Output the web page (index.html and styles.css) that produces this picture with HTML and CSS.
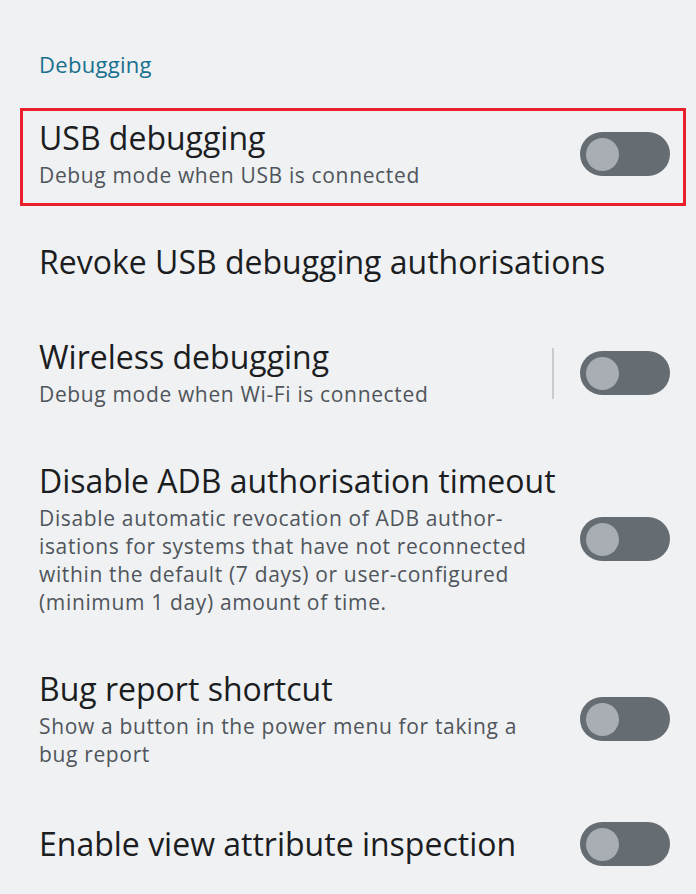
FILE: index.html
```html
<!DOCTYPE html>
<html lang="en">
<head>
<meta charset="utf-8">
<title>Debugging</title>
<link rel="stylesheet" href="styles.css">
</head>
<body>
<div class="page">
  <div class="section-header">Debugging</div>
  <div class="list">
    <div class="row highlighted">
      <div class="text">
        <div class="title">USB debugging</div>
        <div class="summary">Debug mode when USB is connected</div>
      </div>
      <div class="switch"><span class="thumb"></span></div>
    </div>
    <div class="row single">
      <div class="text">
        <div class="title">Revoke USB debugging authorisations</div>
      </div>
    </div>
    <div class="row">
      <div class="text">
        <div class="title">Wireless debugging</div>
        <div class="summary">Debug mode when Wi-Fi is connected</div>
      </div>
      <div class="divider"></div>
      <div class="switch"><span class="thumb"></span></div>
    </div>
    <div class="row">
      <div class="text">
        <div class="title">Disable ADB authorisation timeout</div>
        <div class="summary">Disable automatic revocation of ADB author-<br>isations for systems that have not reconnected<br>within the default (7 days) or user-configured<br>(minimum 1 day) amount of time.</div>
      </div>
      <div class="switch"><span class="thumb"></span></div>
    </div>
    <div class="row">
      <div class="text">
        <div class="title">Bug report shortcut</div>
        <div class="summary">Show a button in the power menu for taking a<br>bug report</div>
      </div>
      <div class="switch"><span class="thumb"></span></div>
    </div>
    <div class="row single">
      <div class="text">
        <div class="title">Enable view attribute inspection</div>
      </div>
      <div class="switch"><span class="thumb"></span></div>
    </div>
  </div>
</div>
</body>
</html>
```
FILE: styles.css
```css
html, body {
  margin: 0;
  padding: 0;
  background: #eff1f3;
}
body {
  font-family: "Open Sans", "Noto Sans", sans-serif;
  width: 696px;
  height: 894px;
  overflow: hidden;
}
.page {
  padding-top: 50px;
}
.section-header {
  padding-left: 39px;
  font-size: 22px;
  line-height: 28px;
  letter-spacing: 0.3px;
  color: #18708e;
  margin-bottom: 30px;
}
.list {
  display: flex;
  flex-direction: column;
  gap: 26px;
}
.row {
  display: flex;
  align-items: center;
  margin: 0 10px 0 20px;
  border: 3px solid transparent;
  padding: 8px 13px 14px 16px;
}
.row.single {
  padding-bottom: 17px;
}
.row.highlighted {
  border-color: #e8212b;
}
.text {
  flex: 1;
  min-width: 0;
}
.title {
  font-size: 32px;
  line-height: 38px;
  color: #1c1d1f;
  white-space: nowrap;
}
.summary {
  font-size: 21px;
  line-height: 28px;
  letter-spacing: 0.65px;
  color: #4f555b;
  margin-top: 4px;
}
.divider {
  width: 2px;
  height: 51px;
  background: #c9cbce;
  margin-right: 26px;
  flex: none;
}
.switch {
  flex: none;
  width: 90px;
  height: 44px;
  border-radius: 22px;
  background: #656c72;
  display: flex;
  align-items: center;
  padding-left: 6px;
  box-sizing: border-box;
}
.thumb {
  width: 33px;
  height: 33px;
  border-radius: 50%;
  background: #a8aeb4;
}
```
